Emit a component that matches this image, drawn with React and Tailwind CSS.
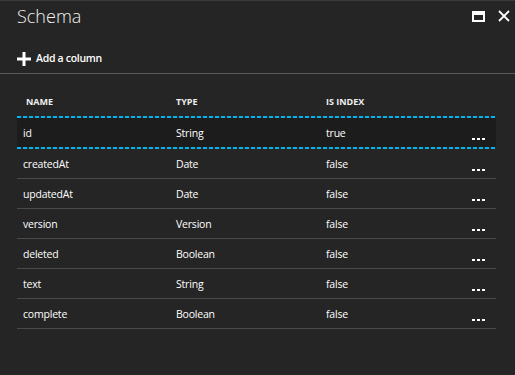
import React from 'react';

const rows = [
  { name: 'id', type: 'String', index: 'true', selected: true },
  { name: 'createdAt', type: 'Date', index: 'false' },
  { name: 'updatedAt', type: 'Date', index: 'false' },
  { name: 'version', type: 'Version', index: 'false' },
  { name: 'deleted', type: 'Boolean', index: 'false' },
  { name: 'text', type: 'String', index: 'false' },
  { name: 'complete', type: 'Boolean', index: 'false' },
];

const Dots = () => (
  <div className="flex gap-[2px] mt-[10px]">
    <span className="w-[3px] h-[2px] bg-white"></span>
    <span className="w-[3px] h-[2px] bg-white"></span>
    <span className="w-[3px] h-[2px] bg-white"></span>
  </div>
);

const DashLine = () => (
  <div className="h-[2px] bg-[repeating-linear-gradient(90deg,#00b4f0_0px,#00b4f0_4px,transparent_4px,transparent_6px)]"></div>
);

const Cells = ({ row }) => (
  <>
    <div className="w-[153px] flex items-center">{row.name}</div>
    <div className="w-[150px] flex items-center">{row.type}</div>
    <div className="flex-1 flex items-center">{row.index}</div>
    <div className="flex items-center"><Dots /></div>
  </>
);

export default function App() {
  return (
    <div
      className="w-[515px] h-[375px] bg-[#252525] text-white border-t border-[#3a3a3a] overflow-hidden"
      style={{ fontFamily: '"Open Sans", "Noto Sans", sans-serif' }}
    >
      {/* Title bar */}
      <div className="flex items-center justify-between h-[30px] pl-[17px] pr-[5px]">
        <h1 className="text-[18px] font-light text-[#f0f0f0] leading-none">Schema</h1>
        <div className="flex items-center gap-[13px]">
          <svg width="13" height="11" viewBox="0 0 13 11">
            <rect x="1" y="1" width="11" height="9" fill="none" stroke="#fff" strokeWidth="2" />
            <rect x="1" y="1" width="11" height="3" fill="#fff" />
          </svg>
          <svg width="12" height="12" viewBox="0 0 12 12">
            <path d="M1 1 L11 11 M11 1 L1 11" stroke="#fff" strokeWidth="1.8" />
          </svg>
        </div>
      </div>

      {/* Toolbar */}
      <div className="flex items-center h-[43px] pl-[17px] border-b border-[#5a5a5a] pt-[13px]">
        <svg width="14" height="14" viewBox="0 0 14 14">
          <path d="M7 0 V14 M0 7 H14" stroke="#fff" strokeWidth="3" />
        </svg>
        <span className="ml-[5px] text-[10.5px] font-semibold tracking-[-0.3px]">Add a column</span>
      </div>

      {/* Table */}
      <div className="pl-[17px] pr-[19px]">
        <div className="flex items-center h-[42px] text-[9px] font-bold uppercase text-[#f0f0f0] pl-[9px] pt-[13px]">
          <div className="w-[150px]">Name</div>
          <div className="w-[150px]">Type</div>
          <div>Is Index</div>
        </div>

        {rows.map((row) =>
          row.selected ? (
            <div key={row.name}>
              <DashLine />
              <div className="flex h-[29px] bg-[#1c1c1c] text-[10.5px] tracking-[-0.2px] pl-[6px] pr-[11px] pt-[3px]">
                <Cells row={row} />
              </div>
              <DashLine />
            </div>
          ) : (
            <div
              key={row.name}
              className="flex h-[30px] border-b border-[#4a4a4a] text-[10.5px] tracking-[-0.2px] pl-[6px] pr-[11px] pt-[3px]"
            >
              <Cells row={row} />
            </div>
          )
        )}
      </div>
    </div>
  );
}
